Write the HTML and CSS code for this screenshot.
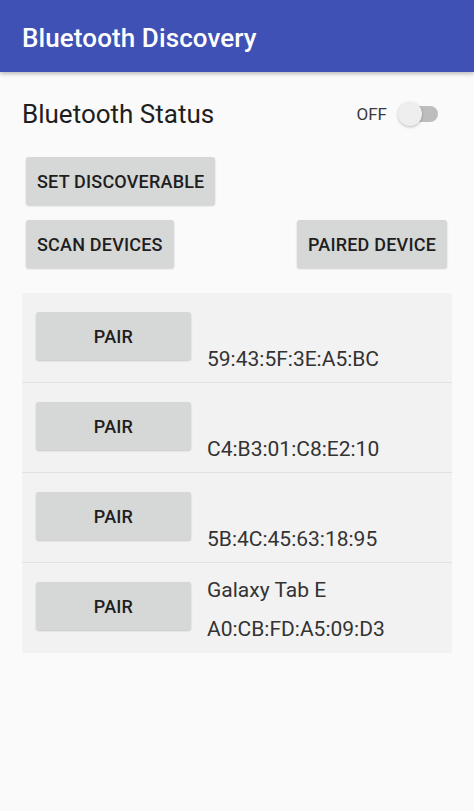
FILE: index.html
```html
<!DOCTYPE html>
<html lang="en">
<head>
<meta charset="utf-8">
<title>Bluetooth Discovery</title>
<link rel="stylesheet" href="styles.css">
</head>
<body>
<header class="app-bar">
  <h1 class="app-title">Bluetooth Discovery</h1>
</header>
<main class="content">
  <div class="status-row">
    <span class="status-label">Bluetooth Status</span>
    <div class="switch">
      <span class="switch-text">OFF</span>
      <span class="switch-track"><span class="switch-thumb"></span></span>
    </div>
  </div>
  <div class="actions">
    <div class="action-row">
      <button class="btn">SET DISCOVERABLE</button>
    </div>
    <div class="action-row split">
      <button class="btn">SCAN DEVICES</button>
      <button class="btn">PAIRED DEVICE</button>
    </div>
  </div>
  <ul class="device-list">
    <li class="device">
      <button class="btn pair">PAIR</button>
      <div class="device-info">
        <div class="device-name"></div>
        <div class="device-mac">59:43:5F:3E:A5:BC</div>
      </div>
    </li>
    <li class="device">
      <button class="btn pair">PAIR</button>
      <div class="device-info">
        <div class="device-name"></div>
        <div class="device-mac">C4:B3:01:C8:E2:10</div>
      </div>
    </li>
    <li class="device">
      <button class="btn pair">PAIR</button>
      <div class="device-info">
        <div class="device-name"></div>
        <div class="device-mac">5B:4C:45:63:18:95</div>
      </div>
    </li>
    <li class="device">
      <button class="btn pair">PAIR</button>
      <div class="device-info">
        <div class="device-name">Galaxy Tab E</div>
        <div class="device-mac">A0:CB:FD:A5:09:D3</div>
      </div>
    </li>
  </ul>
</main>
</body>
</html>
```
FILE: styles.css
```css
* {
  box-sizing: border-box;
}

html, body {
  margin: 0;
  padding: 0;
}

body {
  background: #fafafa;
  font-family: Roboto, "Noto Sans", "Liberation Sans", sans-serif;
  color: #222;
  width: 474px;
  min-height: 811px;
}

/* top toolbar */
.app-bar {
  height: 72px;
  background: #3f51b5;
  display: flex;
  align-items: center;
  padding: 4px 0 0 22px;
  box-shadow: 0 2px 4px rgba(0, 0, 0, 0.25);
  position: relative;
  z-index: 1;
}

.app-title {
  margin: 0;
  color: #fff;
  font-size: 26px;
  font-weight: 500;
  letter-spacing: 0.1px;
}

.content {
  padding: 24px 22px 0 22px;
}

/* status line with switch */
.status-row {
  height: 36px;
  display: flex;
  align-items: center;
  justify-content: space-between;
}

.status-label {
  font-size: 26px;
  color: #1e1e1e;
}

.switch {
  display: flex;
  align-items: center;
  gap: 13px;
  padding-right: 14px;
}

.switch-text {
  font-size: 17px;
  color: #3a3a3a;
}

.switch-track {
  position: relative;
  width: 38px;
  height: 16px;
  border-radius: 8px;
  background: #bdbdbd;
}

.switch-thumb {
  position: absolute;
  left: -2px;
  top: -4px;
  width: 24px;
  height: 24px;
  border-radius: 50%;
  background: #eeeeee;
  box-shadow: 0 1px 3px rgba(0, 0, 0, 0.25);
}

/* raised buttons */
.btn {
  font-family: Roboto, "Noto Sans", "Liberation Sans", sans-serif;
  font-size: 18px;
  font-weight: 500;
  color: #1e1e1e;
  background: #d6d7d7;
  border: none;
  border-radius: 3px;
  height: 48px;
  padding: 0 11px;
  box-shadow: 0 1px 2px rgba(0, 0, 0, 0.18);
  letter-spacing: 0.2px;
}

.actions {
  display: flex;
  flex-direction: column;
  gap: 15px;
  padding: 25px 5px 0 4px;
}

.action-row {
  display: flex;
}

.action-row.split {
  justify-content: space-between;
}

/* discovered devices */
.device-list {
  list-style: none;
  margin: 25px 0 0 0;
  padding: 0;
  background: #f2f2f2;
  border-radius: 2px;
}

.device {
  height: 90px;
  display: flex;
  align-items: flex-start;
  padding: 19px 0 0 14px;
  border-bottom: 1px solid #e2e2e2;
}

.device:last-child {
  border-bottom: none;
}

.btn.pair {
  width: 155px;
  flex: none;
}

.device-info {
  margin-left: 16px;
  margin-top: -11px;
  font-size: 21px;
  line-height: 39px;
  color: #333;
}

.device-name {
  height: 39px;
}
```
